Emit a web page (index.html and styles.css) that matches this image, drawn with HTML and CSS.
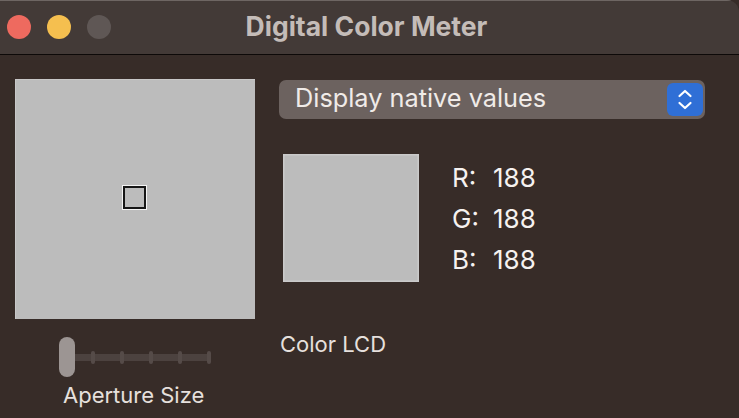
FILE: index.html
```html
<!DOCTYPE html>
<html>
<head>
<meta charset="utf-8">
<link rel="stylesheet" href="styles.css">
</head>
<body>
<div class="window">
  <div class="titlebar">
    <div class="lights">
      <span class="light red"></span>
      <span class="light yellow"></span>
      <span class="light gray"></span>
    </div>
    <div class="title">Digital Color Meter</div>
  </div>
  <div class="content">
    <div class="left">
      <div class="preview"><div class="aperture"></div></div>
      <div class="slider">
        <div class="thumb"></div>
        <div class="track">
          <span class="tick"></span><span class="tick"></span><span class="tick"></span><span class="tick"></span><span class="tick"></span>
        </div>
      </div>
      <div class="caption">Aperture Size</div>
    </div>
    <div class="right">
      <div class="popup">
        <span class="popup-label">Display native values</span>
        <span class="stepper">
          <svg width="36" height="33" viewBox="0 0 36 33"><path d="M12.5 13 L18 8 L23.5 13" fill="none" stroke="#fff" stroke-width="2.2" stroke-linecap="round" stroke-linejoin="round"/><path d="M12.5 20 L18 25 L23.5 20" fill="none" stroke="#fff" stroke-width="2.2" stroke-linecap="round" stroke-linejoin="round"/></svg>
        </span>
      </div>
      <div class="reading">
        <div class="swatch"></div>
        <div class="values">
          <div class="row"><span class="ch">R:</span><span class="num">188</span></div>
          <div class="row"><span class="ch">G:</span><span class="num">188</span></div>
          <div class="row"><span class="ch">B:</span><span class="num">188</span></div>
        </div>
      </div>
      <div class="display">Color LCD</div>
    </div>
  </div>
</div>
</body>
</html>
```
FILE: styles.css
```css
html, body { margin: 0; padding: 0; }
body {
  width: 739px; height: 418px; overflow: hidden;
  background: #372c28;
  font-family: Inter, "Noto Sans", sans-serif;
}
.window {
  width: 739px; height: 418px;
  background: #372c28;
  border-top-right-radius: 12px;
  overflow: hidden;
  position: relative;
}
.titlebar {
  background: #433a37;
  border-top: 1px solid #6e6663;
  border-bottom: 1px solid #0d0908;
  box-sizing: border-box;
  height: 55px;
  display: flex;
  align-items: center;
  position: relative;
}
.lights { display: flex; gap: 16px; padding-left: 7px; margin-top: -2px; }
.light { width: 24px; height: 24px; border-radius: 50%; display: block; }
.red { background: #ee6a5f; }
.yellow { background: #f5bf4f; }
.gray { background: #5f5755; }
.title {
  position: absolute; left: 0; right: 0; top: 9px;
  text-align: center;
  font-weight: 700; font-size: 26.5px;
  color: #c4bcb8;
  padding-right: 6px;
}
.content { display: flex; padding-top: 24px; }
.left { width: 279px; padding-left: 15px; box-sizing: border-box; }
.preview {
  width: 240px; height: 240px;
  background: #bcbcbc;
  box-shadow: inset 1px 1px 0 #c8c8c8;
  display: flex; align-items: center; justify-content: center;
}
.aperture {
  width: 19px; height: 19px;
  border: 2px solid #161616;
  outline: 1px solid #f4f4f4;
  background: #bcbcbc;
  margin-left: -2px; margin-top: -3px;
}
.slider { display: flex; align-items: center; margin-top: 18px; margin-left: 44px; height: 40px; }
.thumb { width: 16px; height: 40px; border-radius: 8px; background: #9c9593; }
.track {
  width: 136px; height: 7px; background: #4c423f;
  display: flex; justify-content: space-between; align-items: center;
  padding-left: 16px; box-sizing: border-box;
}
.tick { width: 4px; height: 13px; border-radius: 2px; background: #554b48; }
.caption { margin-top: 5px; margin-left: 48px; font-size: 22px; color: #e6e0dd; }
.right { flex: 1; }
.popup {
  margin-top: 1px;
  width: 426px; height: 39px;
  background: #6c625f;
  border-radius: 7px;
  display: flex; align-items: center; justify-content: space-between;
  box-sizing: border-box;
  padding-left: 16px; padding-right: 2px;
}
.popup-label { font-size: 25.3px; color: #f0ebe8; margin-top: -4px; }
.stepper {
  width: 36px; height: 33px; border-radius: 6px;
  background: #2f6fd6;
  display: flex;
}
.reading { display: flex; margin-top: 35px; margin-left: 4px; }
.swatch {
  width: 136px; height: 128px;
  background: #bcbcbc;
  box-shadow: inset 0 0 0 1.5px #cacaca;
}
.values { margin-left: 33px; margin-top: 8px; }
.row { display: flex; font-size: 26px; color: #f6f2f0; height: 41px; }
.ch { width: 41px; }
.display { margin-top: 46px; margin-left: 1px; font-size: 22px; color: #e6e0dd; }
```
